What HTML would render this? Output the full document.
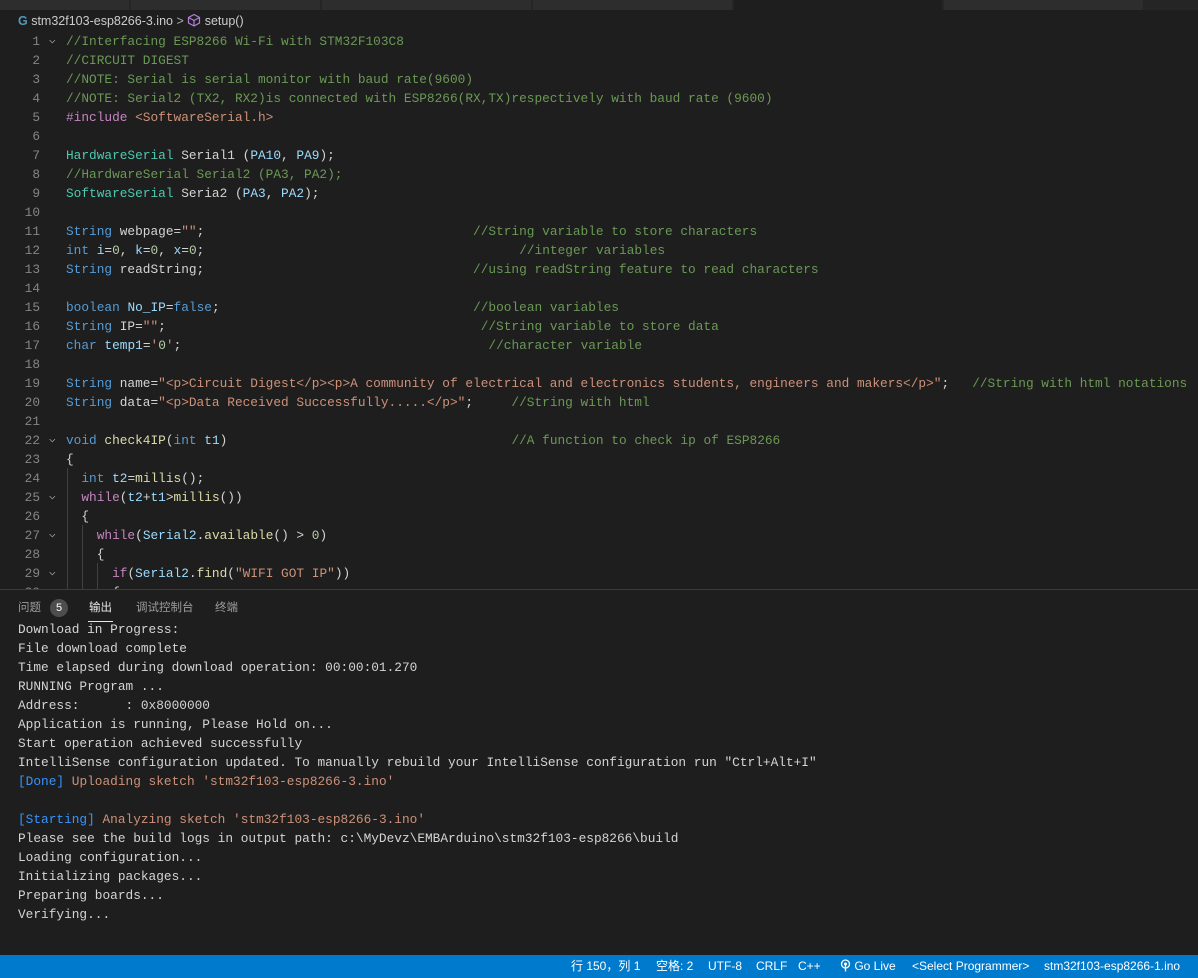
<!DOCTYPE html>
<html><head><meta charset="utf-8"><style>
*{margin:0;padding:0;box-sizing:border-box}
body{width:1198px;height:978px;background:#1e1e1e;overflow:hidden;position:relative;font-family:"Liberation Sans","Noto Sans CJK SC",sans-serif;color:#ccc}
.tabs{position:absolute;left:0;top:0;width:1198px;height:10px;background:#252526}
.tab{position:absolute;top:0;height:10px;background:#2d2d2d;border-right:1px solid #252526}
.bc{position:absolute;top:12px;left:18px;font-size:12.5px;color:#ccc;white-space:nowrap;height:18px;line-height:18px}
.ed{position:absolute;left:0;top:31px;width:1198px;height:558px;overflow:hidden}
.ln{position:absolute;left:0;height:19px;line-height:19px;font-family:"Liberation Mono",monospace;font-size:12.8px;white-space:pre}
.num{position:absolute;width:40px;text-align:right;color:#858585}
.code{position:absolute;left:66px;color:#d4d4d4}
.chev{position:absolute;left:49px;top:0;color:#c5c5c5;font-size:11px}
.guide{position:absolute;width:1px;background:#404040}
.c{color:#6a9955}.k{color:#569cd6}.t{color:#4ec9b0}.s{color:#ce9178}.p{color:#c586c0}.f{color:#dcdcaa}.v{color:#9cdcfe}.n{color:#b5cea8}.w{color:#d4d4d4}
.panel{position:absolute;left:0;top:589px;width:1198px;height:366px;background:#1e1e1e;border-top:1px solid #3c3c3c}
.ptab{position:absolute;top:10px;font-size:11.5px;color:#9d9d9d;line-height:16px}
.out{position:absolute;left:18px;font-family:"Liberation Mono",monospace;font-size:12.8px;white-space:pre;color:#d4d4d4;height:19px;line-height:19px}
.status{position:absolute;left:0;top:955px;width:1198px;height:23px;background:#007acc;color:#fff;font-size:12px;line-height:23px}
.status span{position:absolute;top:0;white-space:nowrap}
</style></head><body>
<div class="tabs">
<div class="tab" style="left:0;width:130px"></div>
<div class="tab" style="left:131px;width:190px"></div>
<div class="tab" style="left:322px;width:210px"></div>
<div class="tab" style="left:533px;width:200px"></div>
<div class="tab" style="left:734px;width:209px;background:#1e1e1e"></div>
<div class="tab" style="left:944px;width:200px"></div>
</div>
<div class="bc"><span style="color:#519aba;font-weight:bold">G</span> stm32f103-esp8266-3.ino <span style="color:#aaa">&gt;</span> <svg width="14" height="14" viewBox="0 0 14 14" style="vertical-align:-2px"><path d="M7 1.5L12.5 4.5V10L7 13L1.5 10V4.5Z M1.5 4.5L7 7.5L12.5 4.5 M7 7.5V13" fill="none" stroke="#b180d7" stroke-width="1.2"/></svg> setup()</div>
<div class="ed">
<div class="guide" style="left:67px;top:437px;height:130px"></div>
<div class="guide" style="left:82px;top:494px;height:70px"></div>
<div class="guide" style="left:97px;top:532px;height:30px"></div>
<div class="ln" style="top:1px"><span class="num">1</span><span class="chev">⌵</span><span class="code c">//Interfacing ESP8266 Wi-Fi with STM32F103C8</span></div>
<div class="ln" style="top:20px"><span class="num">2</span><span class="code c">//CIRCUIT DIGEST</span></div>
<div class="ln" style="top:39px"><span class="num">3</span><span class="code c">//NOTE: Serial is serial monitor with baud rate(9600)</span></div>
<div class="ln" style="top:58px"><span class="num">4</span><span class="code c">//NOTE: Serial2 (TX2, RX2)is connected with ESP8266(RX,TX)respectively with baud rate (9600)</span></div>
<div class="ln" style="top:77px"><span class="num">5</span><span class="code"><span class="p">#include</span> <span class="s">&lt;SoftwareSerial.h&gt;</span></span></div>
<div class="ln" style="top:96px"><span class="num">6</span></div>
<div class="ln" style="top:115px"><span class="num">7</span><span class="code"><span class="t">HardwareSerial</span> Serial1 (<span class="v">PA10</span>, <span class="v">PA9</span>);</span></div>
<div class="ln" style="top:134px"><span class="num">8</span><span class="code c">//HardwareSerial Serial2 (PA3, PA2);</span></div>
<div class="ln" style="top:153px"><span class="num">9</span><span class="code"><span class="t">SoftwareSerial</span> Seria2 (<span class="v">PA3</span>, <span class="v">PA2</span>);</span></div>
<div class="ln" style="top:172px"><span class="num">10</span></div>
<div class="ln" style="top:191px"><span class="num">11</span><span class="code"><span class="k">String</span> webpage=<span class="s">""</span>;                                   <span class="c">//String variable to store characters</span></span></div>
<div class="ln" style="top:210px"><span class="num">12</span><span class="code"><span class="k">int</span> <span class="v">i</span>=<span class="n">0</span>, <span class="v">k</span>=<span class="n">0</span>, <span class="v">x</span>=<span class="n">0</span>;                                         <span class="c">//integer variables</span></span></div>
<div class="ln" style="top:229px"><span class="num">13</span><span class="code"><span class="k">String</span> readString;                                   <span class="c">//using readString feature to read characters</span></span></div>
<div class="ln" style="top:248px"><span class="num">14</span></div>
<div class="ln" style="top:267px"><span class="num">15</span><span class="code"><span class="k">boolean</span> <span class="v">No_IP</span>=<span class="k">false</span>;                                 <span class="c">//boolean variables</span></span></div>
<div class="ln" style="top:286px"><span class="num">16</span><span class="code"><span class="k">String</span> IP=<span class="s">""</span>;                                         <span class="c">//String variable to store data</span></span></div>
<div class="ln" style="top:305px"><span class="num">17</span><span class="code"><span class="k">char</span> <span class="v">temp1</span>=<span class="s">'<span class="n">0</span>'</span>;                                        <span class="c">//character variable</span></span></div>
<div class="ln" style="top:324px"><span class="num">18</span></div>
<div class="ln" style="top:343px"><span class="num">19</span><span class="code"><span class="k">String</span> name=<span class="s">"&lt;p&gt;Circuit Digest&lt;/p&gt;&lt;p&gt;A community of electrical and electronics students, engineers and makers&lt;/p&gt;"</span>;   <span class="c">//String with html notations</span></span></div>
<div class="ln" style="top:362px"><span class="num">20</span><span class="code"><span class="k">String</span> data=<span class="s">"&lt;p&gt;Data Received Successfully.....&lt;/p&gt;"</span>;     <span class="c">//String with html</span></span></div>
<div class="ln" style="top:381px"><span class="num">21</span></div>
<div class="ln" style="top:400px"><span class="num">22</span><span class="chev">⌵</span><span class="code"><span class="k">void</span> <span class="f">check4IP</span>(<span class="k">int</span> <span class="v">t1</span>)                                     <span class="c">//A function to check ip of ESP8266</span></span></div>
<div class="ln" style="top:419px"><span class="num">23</span><span class="code">{</span></div>
<div class="ln" style="top:438px"><span class="num">24</span><span class="code">  <span class="k">int</span> <span class="v">t2</span>=<span class="f">millis</span>();</span></div>
<div class="ln" style="top:457px"><span class="num">25</span><span class="chev">⌵</span><span class="code">  <span class="p">while</span>(<span class="v">t2</span>+<span class="v">t1</span>&gt;<span class="f">millis</span>())</span></div>
<div class="ln" style="top:476px"><span class="num">26</span><span class="code">  {</span></div>
<div class="ln" style="top:495px"><span class="num">27</span><span class="chev">⌵</span><span class="code">    <span class="p">while</span>(<span class="v">Serial2</span>.<span class="f">available</span>() &gt; <span class="n">0</span>)</span></div>
<div class="ln" style="top:514px"><span class="num">28</span><span class="code">    {</span></div>
<div class="ln" style="top:533px"><span class="num">29</span><span class="chev">⌵</span><span class="code">      <span class="p">if</span>(<span class="v">Serial2</span>.<span class="f">find</span>(<span class="s">"WIFI GOT IP"</span>))</span></div>
<div class="ln" style="top:552px"><span class="num">30</span><span class="code">      {</span></div>
</div>
<div class="panel">
<span class="ptab" style="left:18px">问题</span>
<span style="position:absolute;left:50px;top:9px;width:18px;height:18px;border-radius:9px;background:#4d4d4d;color:#fff;font-size:11px;text-align:center;line-height:18px">5</span>
<span class="ptab" style="left:89px;color:#e7e7e7">输出</span>
<span style="position:absolute;left:88px;top:31px;width:25px;height:1px;background:#e7e7e7"></span>
<span class="ptab" style="left:136px">调试控制台</span>
<span class="ptab" style="left:215px">终端</span>
</div>
<div class="out" style="top:620px">Download in Progress:</div>
<div class="out" style="top:639px">File download complete</div>
<div class="out" style="top:658px">Time elapsed during download operation: 00:00:01.270</div>
<div class="out" style="top:677px">RUNNING Program ...</div>
<div class="out" style="top:696px">Address:      : 0x8000000</div>
<div class="out" style="top:715px">Application is running, Please Hold on...</div>
<div class="out" style="top:734px">Start operation achieved successfully</div>
<div class="out" style="top:753px">IntelliSense configuration updated. To manually rebuild your IntelliSense configuration run "Ctrl+Alt+I"</div>
<div class="out" style="top:772px"><span style="color:#3794ff">[Done]</span> <span class="s">Uploading sketch 'stm32f103-esp8266-3.ino'</span></div>
<div class="out" style="top:810px"><span style="color:#3794ff">[Starting]</span> <span class="s">Analyzing sketch 'stm32f103-esp8266-3.ino'</span></div>
<div class="out" style="top:829px">Please see the build logs in output path: c:\MyDevz\EMBArduino\stm32f103-esp8266\build</div>
<div class="out" style="top:848px">Loading configuration...</div>
<div class="out" style="top:867px">Initializing packages...</div>
<div class="out" style="top:886px">Preparing boards...</div>
<div class="out" style="top:905px">Verifying...</div>
<div class="status">
<span style="left:571px">行 150，列 1</span>
<span style="left:656px">空格: 2</span>
<span style="left:708px">UTF-8</span>
<span style="left:756px">CRLF</span>
<span style="left:798px">C++</span>
<span style="left:840px"><svg width="11" height="13" viewBox="0 0 11 13" style="vertical-align:-2px"><circle cx="5.5" cy="5" r="4" fill="none" stroke="#fff" stroke-width="1.3"/><circle cx="5.5" cy="5" r="1.5" fill="#fff"/><path d="M5.5 6.5V12.5" stroke="#fff" stroke-width="1.3"/></svg> Go Live</span>
<span style="left:912px">&lt;Select Programmer&gt;</span>
<span style="left:1044px">stm32f103-esp8266-1.ino</span>
</div>
</body></html>
